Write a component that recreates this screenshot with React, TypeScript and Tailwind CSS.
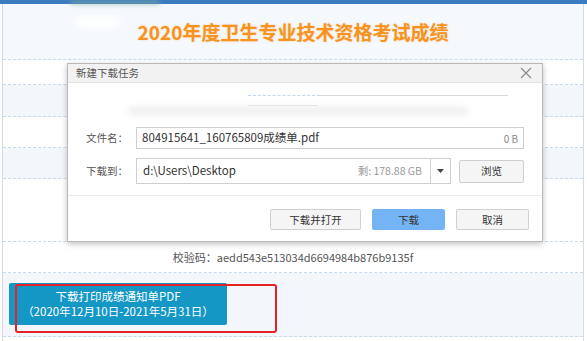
import React from "react";

const font = { fontFamily: '"Noto Sans CJK SC", "Noto Sans", sans-serif' };

export default function App() {
  return (
    <div className="relative w-[587px] h-[341px] overflow-hidden bg-white" style={font}>
      <div className="h-[4px] bg-[#3b7bc0]" />
      <div className="ml-[2px] w-[582px] h-[337px] flex flex-col bg-white border-l border-r border-[#d6dbe2]">
        <div className="h-[56px] shrink-0 flex items-center justify-center bg-[#f5f8fc] border-b border-dashed border-[#c6daef]">
          <span className="text-[19px] font-bold text-[#f7931e] leading-none [text-shadow:0_0_2px_rgba(247,147,30,0.35)]">
            2020年度卫生专业技术资格考试成绩
          </span>
        </div>
        <div className="h-[25px] shrink-0 border-b border-dashed border-[#c6daef]" />
        <div className="h-[32px] shrink-0 bg-[#f3f7fc] border-b border-dashed border-[#c6daef]" />
        <div className="h-[31px] shrink-0 border-b border-dashed border-[#c6daef]" />
        <div className="h-[31px] shrink-0 bg-[#f3f7fc] border-b border-dashed border-[#c6daef]" />
        <div className="h-[63px] shrink-0 border-b border-dashed border-[#c6daef]" />
        <div className="h-[31px] shrink-0 flex items-center justify-center border-b border-dashed border-[#c6daef]">
          <span className="text-[11px] text-[#555]">校验码：aedd543e513034d6694984b876b9135f</span>
        </div>
        <div className="h-[64px] shrink-0 bg-[#f3f7fc] border-b border-dashed border-[#c6daef] pl-[6px] pt-[10px]">
          <div className="relative w-[218px] h-[42px] rounded-[2px] bg-[#1597c5] flex flex-col items-center justify-center text-white text-[11.5px] leading-[15px]">
            <span>下载打印成绩通知单PDF</span>
            <span>（2020年12月10日-2021年5月31日）</span>
            <div className="absolute left-[6px] top-[1px] w-[262px] h-[49px] border-2 border-[#e52323] rounded-[3px]" />
          </div>
        </div>
      </div>

      {/* faint smudges */}
      <div className="absolute left-[70px] top-[0px] w-[90px] h-[5px] rounded-full bg-[#7fb09a] opacity-50 blur-[2px]" />
      <div className="absolute left-[75px] top-[16px] w-[45px] h-[12px] rounded-full bg-white opacity-90 blur-[3px]" />

      {/* dialog */}
      <div className="absolute left-[67px] top-[63px] w-[476px] h-[179px] bg-white border border-[#b9b9b9] shadow-[0_2px_6px_rgba(0,0,0,0.25)] flex flex-col">
        <div className="h-[19px] shrink-0 bg-[#f2f2f2] border-b border-[#e3e3e3] flex items-center justify-between pl-[8px] pr-[10px]">
          <span className="text-[10.5px] text-[#555]">新建下载任务</span>
          <svg width="12" height="12" viewBox="0 0 12 12" className="text-[#888]">
            <path d="M1 1L11 11M11 1L1 11" stroke="currentColor" strokeWidth="1.1" />
          </svg>
        </div>
        <div className="relative flex-1 flex flex-col pl-[18px] pr-[18px]">
          <div className="absolute left-[180px] top-[12px] w-[72px] border-t border-dashed border-[#a9c6e6] opacity-70" />
          <div className="absolute left-[252px] top-[12px] w-[188px] h-[1px] bg-[#c8c8c8] opacity-70 blur-[0.5px]" />
          <div className="absolute left-[180px] top-[22px] w-[70px] h-[1px] bg-[#c8c8c8] opacity-60" />
          <div className="absolute left-[60px] top-[24px] w-[340px] h-[8px] rounded-full bg-[#eeeeee] blur-[3px]" />

          <div className="mt-[44px] flex items-center h-[22px]">
            <span className="w-[50px] text-[10.5px] text-[#555]">文件名：</span>
            <div className="flex-1 h-[22px] border border-[#cfcfcf] flex items-center justify-between pl-[5px] pr-[5px]">
              <span className="text-[11.5px] text-[#333]">804915641_160765809成绩单.pdf</span>
              <span className="text-[10px] text-[#888]">0 B</span>
            </div>
          </div>

          <div className="mt-[9px] flex items-center h-[26px]">
            <span className="w-[50px] text-[10.5px] text-[#555]">下载到：</span>
            <div className="w-[315px] h-[26px] border border-[#cfcfcf] flex items-center">
              <span className="flex-1 pl-[6px] text-[11.5px] text-[#333]">d:\Users\Desktop</span>
              <span className="pr-[8px] text-[10.5px] text-[#999]">剩: 178.88 GB</span>
              <div className="w-[20px] h-full border-l border-[#cfcfcf] flex items-center justify-center">
                <svg width="7" height="4" viewBox="0 0 7 4">
                  <path d="M0 0H7L3.5 4Z" fill="#444" />
                </svg>
              </div>
            </div>
            <div className="ml-[8px] w-[65px] h-[23px] border border-[#cfcfcf] bg-[#f5f5f5] rounded-[2px] flex items-center justify-center text-[10.5px] text-[#333]">
              浏览
            </div>
          </div>

          <div className="mt-[11px] -mx-[18px] border-t border-[#ececec]" />
          <div className="mt-[13px] flex justify-end gap-[11px] -mr-[5px]">
            <div className="w-[91px] h-[21px] border border-[#d0d0d0] bg-[#f5f5f5] rounded-[2px] flex items-center justify-center text-[10.5px] text-[#333]">
              下载并打开
            </div>
            <div className="w-[73px] h-[21px] bg-[#75b4f4] rounded-[2px] flex items-center justify-center text-[10.5px] text-[#333]">
              下载
            </div>
            <div className="w-[73px] h-[21px] border border-[#d0d0d0] bg-[#f5f5f5] rounded-[2px] flex items-center justify-center text-[10.5px] text-[#333]">
              取消
            </div>
          </div>
        </div>
      </div>
    </div>
  );
}
